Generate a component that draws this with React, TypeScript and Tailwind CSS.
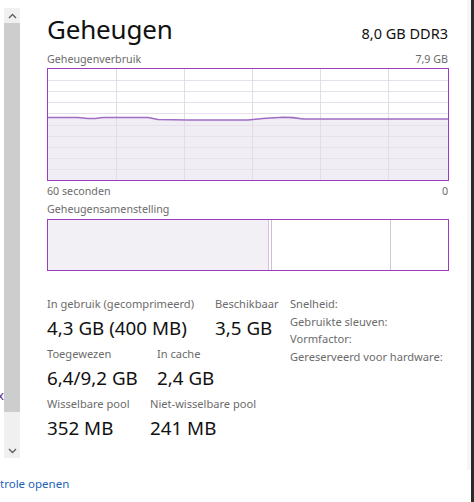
import React from 'react';

const font = { fontFamily: '"Noto Sans", "Open Sans", "Liberation Sans", sans-serif' };

// memory usage line, coordinates inside the chart
const linePts: [number, number][] = [
  [0, 48.5], [30, 48.5], [40, 49.5], [47, 49.5], [55, 48.5], [100, 48.5], [110, 50.5],
  [140, 51], [200, 51], [215, 49.5], [235, 48.3], [245, 48.6], [255, 50], [400, 50],
];

function UsageChart() {
  const w = 400;
  const h = 111;
  const line = linePts.map(([x, y]) => `${x},${y}`).join(' ');
  const area = `0,${h} ${line} ${w},${h}`;
  const rows = Array.from({ length: 9 }, (_, i) => ((i + 1) * h) / 10);
  const cols = [68, 136, 204, 272, 340];
  return (
    <div className="border border-[#9a3cc0] w-[402px] h-[113px]">
      <svg width={w} height={h} className="block">
        <polygon points={area} fill="#f1edf4" />
        {rows.map((y) => (
          <line key={y} x1={0} x2={w} y1={Math.round(y) + 0.5} y2={Math.round(y) + 0.5} stroke="#e6e0ea" strokeWidth={1} />
        ))}
        {cols.map((x) => (
          <line key={x} x1={x + 0.5} x2={x + 0.5} y1={0} y2={h} stroke="#e2dce6" strokeWidth={1} />
        ))}
        <polyline points={line} fill="none" stroke="#a06cc4" strokeWidth={1.6} />
      </svg>
    </div>
  );
}

function CompositionBar() {
  return (
    <div className="border border-[#9a3cc0] w-[402px] h-[52px] flex">
      <div className="w-[220px] h-full bg-[#f2eff5]" />
      <div className="w-px h-full bg-[#d7c3e0]" />
      <div className="w-[2px] h-full bg-white" />
      <div className="w-px h-full bg-[#cbbfd2]" />
      <div className="w-[118px] h-full bg-white" />
      <div className="w-px h-full bg-[#cfc8d4]" />
      <div className="flex-1 h-full bg-white" />
    </div>
  );
}

function Stat({ label, value, className = '' }: { label: string; value: string; className?: string }) {
  return (
    <div className={`flex flex-col ${className}`}>
      <span className="text-[11.1px] leading-[16px] text-[#6b6b6b] whitespace-nowrap">{label}</span>
      <span className="text-[18.8px] leading-[26px] text-[#111] whitespace-nowrap mt-[3px]">{value}</span>
    </div>
  );
}

function Chevron({ up }: { up?: boolean }) {
  return (
    <svg width="9" height="6" viewBox="0 0 9 6" className="block">
      <polyline
        points={up ? '1,5 4.5,1.5 8,5' : '1,1 4.5,4.5 8,1'}
        fill="none"
        stroke="#606060"
        strokeWidth={1.4}
      />
    </svg>
  );
}

function ScrollBar() {
  return (
    <div className="flex flex-col w-[16px] mt-[8px] h-[450px] bg-[#f0f0f0]">
      <div className="h-[15px] flex items-center justify-center">
        <Chevron up />
      </div>
      <div className="h-[389px] bg-[#cdcdcd]" />
      <div className="flex-1" />
      <div className="h-[14px] flex items-center justify-center">
        <Chevron />
      </div>
    </div>
  );
}

export default function App() {
  return (
    <div className="w-[474px] h-[502px] bg-white overflow-hidden flex flex-col" style={font}>
      <div className="flex h-[470px]">
        <div className="w-[47px] flex">
          {/* clipped edge of the side list */}
          <div className="w-[4px] flex flex-col items-end overflow-hidden">
            <span className="mt-[386px] text-[13px] leading-[18px] text-[#5a2a88] whitespace-nowrap">x</span>
          </div>
          <ScrollBar />
        </div>
        <div className="w-[402px] flex flex-col pt-[12px]">
          <div className="flex items-baseline justify-between h-[36px]">
            <span className="text-[26px] leading-[34px] text-[#111] tracking-[-0.2px]">Geheugen</span>
            <span className="text-[14.5px] leading-[20px] text-[#111] mr-[1px]">8,0 GB DDR3</span>
          </div>
          <div className="flex justify-between text-[10.7px] leading-[16px] text-[#6b6b6b] mt-[3px] pr-[1px]">
            <span>Geheugenverbruik</span>
            <span>7,9 GB</span>
          </div>
          <div className="mt-[1px]">
            <UsageChart />
          </div>
          <div className="flex justify-between text-[10.7px] leading-[16px] text-[#6b6b6b] mt-[2px] pr-[1px]">
            <span>60 seconden</span>
            <span>0</span>
          </div>
          <div className="text-[10.7px] leading-[16px] text-[#6b6b6b] mt-[2px]">Geheugensamenstelling</div>
          <div className="mt-[2px]">
            <CompositionBar />
          </div>

          <div className="flex mt-[25px]">
            <div className="flex flex-col gap-[5px] w-[243px]">
              <div className="flex">
                <Stat label="In gebruik (gecomprimeerd)" value="4,3 GB (400 MB)" className="w-[168px]" />
                <Stat label="Beschikbaar" value="3,5 GB" />
              </div>
              <div className="flex">
                <Stat label="Toegewezen" value="6,4/9,2 GB" className="w-[110px]" />
                <Stat label="In cache" value="2,4 GB" />
              </div>
              <div className="flex">
                <Stat label="Wisselbare pool" value="352 MB" className="w-[103px]" />
                <Stat label="Niet-wisselbare pool" value="241 MB" />
              </div>
            </div>
            <div className="flex flex-col text-[11.1px] leading-[17.6px] text-[#6b6b6b] whitespace-nowrap -mt-[1px]">
              <span>Snelheid:</span>
              <span>Gebruikte sleuven:</span>
              <span>Vormfactor:</span>
              <span>Gereserveerd voor hardware:</span>
            </div>
          </div>
        </div>
        <div className="flex-1 flex justify-end">
          <div className="w-[4px] bg-[#f6f6f6]" />
          <div className="w-[3px] bg-[#2a2a2a]" />
        </div>
      </div>
      <div className="flex h-[32px]">
        <div className="flex-1 pt-[6px] -mt-[6px]">
          <span className="text-[11.5px] leading-[16px] text-[#1c63b8]">trole openen</span>
        </div>
        <div className="w-[3px] bg-[#2a2a2a]" />
      </div>
    </div>
  );
}
